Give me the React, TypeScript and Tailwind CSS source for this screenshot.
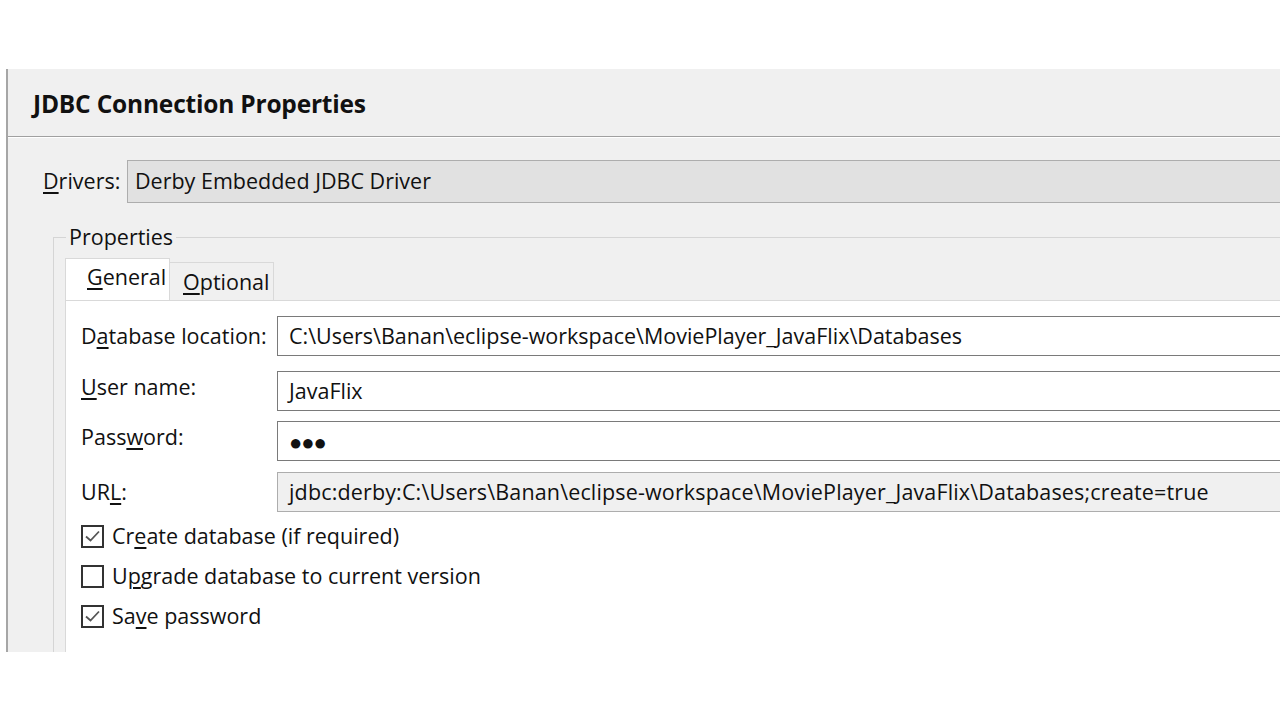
import React from 'react';

const font = { fontFamily: '"Open Sans", "Noto Sans", sans-serif' };

function Field({ label, value, readOnly, labelClass }: { label: React.ReactNode; value: React.ReactNode; readOnly?: boolean; labelClass?: string }) {
  return (
    <div className="flex items-center">
      <div className={`w-[211px] shrink-0 pl-[15px] ${labelClass ?? ''}`}>{label}</div>
      <div
        className={`h-[40px] flex-1 flex items-center pl-[11px] border border-[#7a7a7a] whitespace-nowrap ${
          readOnly ? 'bg-[#f0f0f0] border-[#adadad]' : 'bg-white'
        }`}
      >
        {value}
      </div>
    </div>
  );
}

function Check({ checked, children }: { checked?: boolean; children: React.ReactNode }) {
  return (
    <div className="flex items-center gap-[8px] h-[40px] pl-[15px]">
      <div className="w-[23px] h-[23px] border-2 border-[#333333] bg-white flex items-center justify-center">
        {checked && (
          <svg width="17" height="14" viewBox="0 0 17 14">
            <path d="M2 7.5 L6.5 11.5 L15 2.5" fill="none" stroke="#555555" strokeWidth="1.8" />
          </svg>
        )}
      </div>
      <span>{children}</span>
    </div>
  );
}

export default function App() {
  return (
    <div className="w-[1280px] h-[720px] bg-white overflow-hidden text-[21.5px] text-[#111]" style={font}>
      <div className="pt-[69px]">
        <div className="ml-[6px] w-[1300px] h-[583px] bg-[#f0f0f0] border-l-2 border-[#a6a6a6]">
          {/* Header */}
          <div className="h-[68px] flex items-center pl-[25px] border-b border-[#a0a0a0]">
            <h1 className="font-bold text-[24.5px] tracking-[-0.2px] pt-[4px]">JDBC Connection Properties</h1>
          </div>
          <div className="h-px bg-white" />

          {/* Drivers */}
          <div className="flex items-center mt-[22px] h-[43px]">
            <span className="pl-[35px] w-[119px] shrink-0">
              <u className="underline-offset-[3px]">D</u>rivers:
            </span>
            <div className="flex-1 h-[43px] bg-[#e1e1e1] border border-[#adadad] flex items-center pl-[7px]">
              Derby Embedded JDBC Driver
            </div>
          </div>

          {/* Properties group */}
          <div className="mt-[34px] ml-[45px] border-t border-l border-[#d5d5d5] h-[415px] relative">
            <span className="absolute -top-[15px] left-[12px] bg-[#f0f0f0] px-[3px] leading-[28px]">Properties</span>
            <div className="pl-[11px] pt-[20px]">
              {/* Tabs */}
              <div className="flex items-end h-[42px]">
                <div className="h-[42px] w-[105px] bg-white border border-b-0 border-[#d9d9d9] flex items-center pl-[21px] pb-[4px]">
                  <span>
                    <u className="underline-offset-[3px]">G</u>eneral
                  </span>
                </div>
                <div className="h-[38px] w-[104px] bg-[#f0f0f0] border border-l-0 border-b-0 border-[#d9d9d9] flex items-center pl-[13px] pt-[2px]">
                  <span>
                    <u className="underline-offset-[3px]">O</u>ptional
                  </span>
                </div>
              </div>
              {/* Content */}
              <div className="bg-white border-t border-l border-[#d9d9d9] h-[352px] pt-[15px]">
                <div className="flex flex-col">
                  <Field
                    label={
                      <>
                        D<u className="underline-offset-[3px]">a</u>tabase location:
                      </>
                    }
                    value="C:\Users\Banan\eclipse-workspace\MoviePlayer_JavaFlix\Databases"
                  />
                  <div className="h-[15px]" />
                  <Field
                    labelClass="-mt-[8px]"
                    label={
                      <>
                        <u className="underline-offset-[3px]">U</u>ser name:
                      </>
                    }
                    value="JavaFlix"
                  />
                  <div className="h-[10px]" />
                  <Field
                    labelClass="-mt-[8px]"
                    label={
                      <>
                        Pass<u className="underline-offset-[3px]">w</u>ord:
                      </>
                    }
                    value={<span className="text-[22px] tracking-[-1px] leading-none pb-[1px]">●●●</span>}
                  />
                  <div className="h-[11px]" />
                  <Field
                    label={
                      <>
                        UR<u className="underline-offset-[3px]">L</u>:
                      </>
                    }
                    value={<span className="tracking-[0.15px]">jdbc:derby:C:\Users\Banan\eclipse-workspace\MoviePlayer_JavaFlix\Databases;create=true</span>}
                    readOnly
                  />
                </div>
                <div className="mt-[4px] flex flex-col">
                  <Check checked>
                    Cr<u className="underline-offset-[3px]">e</u>ate database (if required)
                  </Check>
                  <Check>
                    U<u className="underline-offset-[3px]">p</u>grade database to current version
                  </Check>
                  <Check checked>
                    Sa<u className="underline-offset-[3px]">v</u>e password
                  </Check>
                </div>
              </div>
            </div>
          </div>
        </div>
      </div>
    </div>
  );
}
